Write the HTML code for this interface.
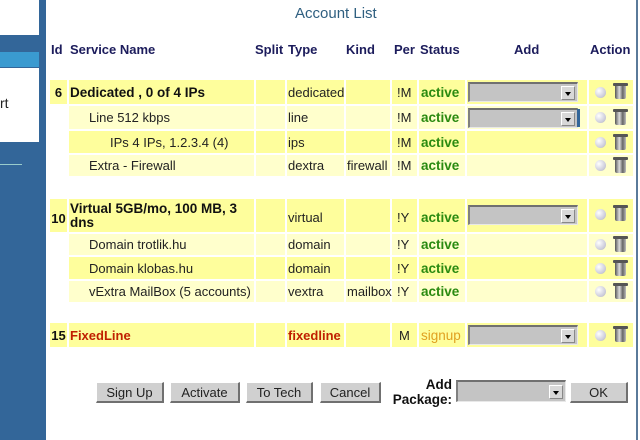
<!DOCTYPE html>
<html><head><style>
*{margin:0;padding:0;box-sizing:border-box}
body{width:640px;height:440px;position:relative;overflow:hidden;background:#fff;font-family:"Liberation Sans",sans-serif;font-size:13px;color:#222}
.a{position:absolute}
.c{position:absolute;top:0;bottom:0;white-space:nowrap;display:flex;align-items:center}
.y{background:#fefe9c}.l{background:#ffffcc}
.b{font-weight:bold;color:#111}
.h{font-weight:bold;color:#1c1c5c;font-size:13px}
.g{color:#2a8a10;font-weight:bold;font-size:13.5px}
.sel{position:absolute;background:#c4c4c4;border-top:2px solid #707070;border-left:2px solid #808080;border-right:1px solid #e8e8e8;border-bottom:1px solid #e8e8e8}
.sel i{position:absolute;right:2px;top:2px;width:14px;height:14px;background:#d8d8d8;border:1px solid #888;border-top-color:#fff;border-left-color:#fff}
.sel i:after{content:"";position:absolute;left:3px;top:5px;border:3px solid transparent;border-top:4px solid #000}
.rad{position:absolute;left:6px;width:11px;height:11px;border-radius:50%;background:radial-gradient(circle at 35% 35%,#fff,#c8c8d8 70%,#999);}
.tr{position:absolute;left:26px;width:11px;height:14px;background:linear-gradient(90deg,#555,#ddd 40%,#666 70%,#bbb);border-radius:1px 1px 2px 2px}
.tr:before{content:"";position:absolute;left:-2px;top:-2px;width:15px;height:3px;background:#555;border-radius:1px}
.btn{position:absolute;height:21px;background:#d0d0d0;border:1px solid #fff;border-right:2px solid #707070;border-bottom:2px solid #707070;font-size:13px;display:flex;align-items:center;justify-content:center;color:#222}
</style></head><body>
<div class="a" style="left:0;top:0;width:46px;height:440px;background:#336699"></div>
<div class="a" style="left:0;top:0;width:39px;height:35px;background:#fff"></div>
<div class="a" style="left:0;top:52px;width:39px;height:15px;background:#3a9ad0"></div>
<div class="a" style="left:0;top:68px;width:39px;height:74px;background:#fff"></div>
<div class="a" style="left:0;top:95px;font-size:14px;color:#222">rt</div>
<div class="a" style="left:0;top:164px;width:22px;height:1px;background:#9cc"></div>
<div class="a" style="left:636px;top:0;width:2px;height:440px;background:#5a7a9a"></div>

<div class="a" style="left:295px;top:5px;font-size:15px;color:#2f5f80">Account List</div>

<div class="a h" style="top:42px;left:51px">Id</div>
<div class="a h" style="top:42px;left:70px">Service Name</div>
<div class="a h" style="top:42px;left:255px">Split</div>
<div class="a h" style="top:42px;left:288px">Type</div>
<div class="a h" style="top:42px;left:346px">Kind</div>
<div class="a h" style="top:42px;left:394px">Per</div>
<div class="a h" style="top:42px;left:420px">Status</div>
<div class="a h" style="top:42px;left:514px">Add</div>
<div class="a h" style="top:42px;left:590px">Action</div>

<div class="a" style="top:80px;height:24px;left:0;width:640px">
<div class="c y b" style="left:50px;width:17px;justify-content:center">6</div>
<div class="c y b" style="left:69px;width:185px;padding-left:1px;font-size:13.5px">Dedicated , 0 of 4 IPs</div>
<div class="c y" style="left:256px;width:29px"></div>
<div class="c y" style="left:287px;width:57px;padding-left:1px">dedicated</div>
<div class="c y" style="left:346px;width:44px"></div>
<div class="c y" style="left:392px;width:25px;padding-left:5px">!M</div>
<div class="c y g" style="left:419px;width:46px;padding-left:2px">active</div>
<div class="c y" style="left:467px;width:120px"><div class="sel" style="left:1px;top:2px;width:110px;height:20px"><i></i></div></div>
<div class="c y" style="left:589px;width:44px"><div class="rad" style="top:7px"></div><div class="tr" style="top:5px"></div></div>
</div>
<div class="a" style="top:106px;height:23px;left:0;width:640px">
<div class="c l" style="left:69px;width:185px;padding-left:20px">Line 512 kbps</div>
<div class="c l" style="left:256px;width:29px"></div>
<div class="c l" style="left:287px;width:57px;padding-left:1px">line</div>
<div class="c l" style="left:346px;width:44px"></div>
<div class="c l" style="left:392px;width:25px;padding-left:5px">!M</div>
<div class="c l g" style="left:419px;width:46px;padding-left:2px">active</div>
<div class="c l" style="left:467px;width:120px"><div class="sel" style="left:1px;top:2px;width:110px;height:20px"><i></i></div><div class="a" style="left:110px;top:3px;width:3px;height:18px;background:#336699"></div></div>
<div class="c l" style="left:589px;width:44px"><div class="rad" style="top:6px"></div><div class="tr" style="top:5px"></div></div>
</div>
<div class="a" style="top:131px;height:22px;left:0;width:640px">
<div class="c y" style="left:69px;width:185px;padding-left:41px">IPs 4 IPs, 1.2.3.4 (4)</div>
<div class="c y" style="left:256px;width:29px"></div>
<div class="c y" style="left:287px;width:57px;padding-left:1px">ips</div>
<div class="c y" style="left:346px;width:44px"></div>
<div class="c y" style="left:392px;width:25px;padding-left:5px">!M</div>
<div class="c y g" style="left:419px;width:46px;padding-left:2px">active</div>
<div class="c y" style="left:467px;width:120px"></div>
<div class="c y" style="left:589px;width:44px"><div class="rad" style="top:6px"></div><div class="tr" style="top:5px"></div></div>
</div>
<div class="a" style="top:155px;height:21px;left:0;width:640px">
<div class="c l" style="left:69px;width:185px;padding-left:20px">Extra - Firewall</div>
<div class="c l" style="left:256px;width:29px"></div>
<div class="c l" style="left:287px;width:57px;padding-left:1px">dextra</div>
<div class="c l" style="left:346px;width:44px;padding-left:1px">firewall</div>
<div class="c l" style="left:392px;width:25px;padding-left:5px">!M</div>
<div class="c l g" style="left:419px;width:46px;padding-left:2px">active</div>
<div class="c l" style="left:467px;width:120px"></div>
<div class="c l" style="left:589px;width:44px"><div class="rad" style="top:5px"></div><div class="tr" style="top:4px"></div></div>
</div>
<div class="a" style="top:199px;height:33px;left:0;width:640px">
<div class="c y b" style="left:50px;width:17px;justify-content:center;padding-top:6px">10</div>
<div class="c y b" style="left:69px;width:185px;padding-left:1px;white-space:normal;line-height:14px;font-size:13.5px">Virtual 5GB/mo, 100 MB, 3 dns</div>
<div class="c y" style="left:256px;width:29px"></div>
<div class="c y" style="left:287px;width:57px;padding-left:1px;padding-top:4px">virtual</div>
<div class="c y" style="left:346px;width:44px"></div>
<div class="c y" style="left:392px;width:25px;padding-left:5px;padding-top:4px">!Y</div>
<div class="c y g" style="left:419px;width:46px;padding-left:2px;padding-top:4px">active</div>
<div class="c y" style="left:467px;width:120px"><div class="sel" style="left:1px;top:6px;width:110px;height:20px"><i></i></div></div>
<div class="c y" style="left:589px;width:44px"><div class="rad" style="top:10px"></div><div class="tr" style="top:8px"></div></div>
</div>
<div class="a" style="top:234px;height:21px;left:0;width:640px">
<div class="c l" style="left:69px;width:185px;padding-left:20px">Domain trotlik.hu</div>
<div class="c l" style="left:256px;width:29px"></div>
<div class="c l" style="left:287px;width:57px;padding-left:1px">domain</div>
<div class="c l" style="left:346px;width:44px"></div>
<div class="c l" style="left:392px;width:25px;padding-left:5px">!Y</div>
<div class="c l g" style="left:419px;width:46px;padding-left:2px">active</div>
<div class="c l" style="left:467px;width:120px"></div>
<div class="c l" style="left:589px;width:44px"><div class="rad" style="top:5px"></div><div class="tr" style="top:4px"></div></div>
</div>
<div class="a" style="top:257px;height:22px;left:0;width:640px">
<div class="c y" style="left:69px;width:185px;padding-left:20px">Domain klobas.hu</div>
<div class="c y" style="left:256px;width:29px"></div>
<div class="c y" style="left:287px;width:57px;padding-left:1px">domain</div>
<div class="c y" style="left:346px;width:44px"></div>
<div class="c y" style="left:392px;width:25px;padding-left:5px">!Y</div>
<div class="c y g" style="left:419px;width:46px;padding-left:2px">active</div>
<div class="c y" style="left:467px;width:120px"></div>
<div class="c y" style="left:589px;width:44px"><div class="rad" style="top:6px"></div><div class="tr" style="top:5px"></div></div>
</div>
<div class="a" style="top:281px;height:21px;left:0;width:640px">
<div class="c l" style="left:69px;width:185px;padding-left:20px">vExtra MailBox (5 accounts)</div>
<div class="c l" style="left:256px;width:29px"></div>
<div class="c l" style="left:287px;width:57px;padding-left:1px">vextra</div>
<div class="c l" style="left:346px;width:44px;padding-left:1px">mailbox</div>
<div class="c l" style="left:392px;width:25px;padding-left:5px">!Y</div>
<div class="c l g" style="left:419px;width:46px;padding-left:2px">active</div>
<div class="c l" style="left:467px;width:120px"></div>
<div class="c l" style="left:589px;width:44px"><div class="rad" style="top:5px"></div><div class="tr" style="top:4px"></div></div>
</div>
<div class="a" style="top:323px;height:24px;left:0;width:640px">
<div class="c y b" style="left:50px;width:17px;justify-content:center">15</div>
<div class="c y b" style="left:69px;width:185px;padding-left:1px;color:#c02000">FixedLine</div>
<div class="c y" style="left:256px;width:29px"></div>
<div class="c y b" style="left:287px;width:57px;padding-left:1px;color:#c02000">fixedline</div>
<div class="c y" style="left:346px;width:44px"></div>
<div class="c y" style="left:392px;width:25px;padding-left:7px">M</div>
<div class="c y" style="left:419px;width:46px;padding-left:2px;color:#e0a020;font-size:13.5px">signup</div>
<div class="c y" style="left:467px;width:120px"><div class="sel" style="left:1px;top:2px;width:110px;height:20px"><i></i></div></div>
<div class="c y" style="left:589px;width:44px"><div class="rad" style="top:7px"></div><div class="tr" style="top:5px"></div></div>
</div>

<div class="btn" style="left:96px;top:382px;width:68px">Sign Up</div>
<div class="btn" style="left:170px;top:382px;width:70px">Activate</div>
<div class="btn" style="left:246px;top:382px;width:67px">To Tech</div>
<div class="btn" style="left:320px;top:382px;width:61px">Cancel</div>
<div class="a h" style="left:384px;top:377px;width:68px;text-align:right;line-height:15px;color:#111;font-size:13.5px">Add<br>Package:</div>
<div class="sel" style="left:456px;top:380px;width:110px;height:22px"><i style="top:3px"></i></div>
<div class="btn" style="left:570px;top:382px;width:58px">OK</div>
</body></html>
